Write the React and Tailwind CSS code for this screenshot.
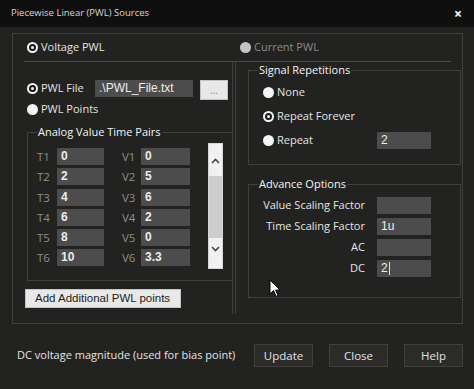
import React from "react";

const Radio = ({ checked, disabled }) => (
  <span
    className={`flex items-center justify-center w-[11px] h-[11px] rounded-full shrink-0 ${
      disabled ? "bg-[#c4c4c4]" : "bg-[#f4f4f4]"
    }`}
  >
    {checked && (
      <span className="flex items-center justify-center w-[7px] h-[7px] rounded-full bg-[#1a1a1a]">
        <span className="w-[3px] h-[3px] rounded-full bg-[#f4f4f4]" />
      </span>
    )}
  </span>
);

const Field = ({ value, w = "w-[47px]", bold }) => (
  <div
    className={`${w} h-[17px] bg-[#4c4c4c] text-[#ececec] text-[12px] leading-[17px] pl-[4px] ${
      bold ? "font-bold" : ""
    }`}
    style={{ fontFamily: "'Liberation Sans', Arial, sans-serif" }}
  >
    {value}
  </div>
);

const pairs = [
  ["0", "0"],
  ["2", "5"],
  ["4", "6"],
  ["6", "2"],
  ["8", "0"],
  ["10", "3.3"],
];

const GroupTitle = ({ children }) => (
  <span className="absolute -top-[9px] left-[9px] px-[1px] bg-[#222221] text-[11px] leading-[16px] text-[#f4f4f4]">
    {children}
  </span>
);

export default function App() {
  return (
    <div
      className="relative w-[474px] h-[389px] bg-[#222221] overflow-hidden text-[#e4e4e4]"
      style={{ fontFamily: "'Open Sans', 'Noto Sans', sans-serif" }}
    >
      {/* Title bar */}
      <div className="h-[27px] bg-[#0f0f0f] flex items-center justify-between pl-[11px] pr-[12px]">
        <span className="text-[9.5px] text-[#d6d6d6]">Piecewise Linear (PWL) Sources</span>
        <span className="text-[14px] font-bold text-white leading-none">×</span>
      </div>

      {/* Main group */}
      <div className="pt-[6px] pl-[12px]">
        <div className="w-[451px] h-[291px] border border-[#3f3f3d] flex flex-col">
          <div className="h-[27px] flex items-center">
            <div className="w-[227px] pl-[14px] flex items-center gap-[3px]">
              <Radio checked />
              <span className="text-[11px]">Voltage PWL</span>
            </div>
            <div className="flex items-center gap-[3px] text-[#8a8a8a]">
              <Radio disabled />
              <span className="text-[11px]">Current PWL</span>
            </div>
          </div>
          <div className="ml-[11px] w-[427px] h-px bg-[#4a4a48]" />

          <div className="flex h-[252px]">
            {/* Left column */}
            <div className="w-[220px] border-r border-[#3f3f3d] flex flex-col">
              <div className="mt-[18px] pl-[14px] flex items-start">
                <div className="w-[68px] h-[17px] flex items-center gap-[3px]">
                  <Radio checked />
                  <span className="text-[11px]">PWL File</span>
                </div>
                <Field value=".\PWL_File.txt" w="w-[98px]" />
                <button className="ml-[7px] w-[28px] h-[20px] bg-[#e8e8e8] border border-[#c2c2c2] text-[#8a8a8a] text-[10px] leading-[18px]">
                  ...
                </button>
              </div>
              <div className="mt-[1px] pl-[14px] h-[17px] flex items-center gap-[3px]">
                <Radio />
                <span className="text-[11px]">PWL Points</span>
              </div>

              {/* Analog group */}
              <div className="relative mt-[14px] ml-[14px] w-[205px] h-[149px] border-l border-t border-b border-[#3f3f3d] flex">
                <GroupTitle>Analog Value Time Pairs</GroupTitle>
                <div className="mt-[15px] ml-[9px] flex flex-col gap-[3px]">
                  {pairs.map(([t, v], i) => (
                    <div key={i} className="flex items-center">
                      <span className="w-[20px] text-[11.5px] text-[#8e8e8e]">T{i + 1}</span>
                      <Field value={t} bold />
                      <span className="ml-[18px] w-[19px] text-[11.5px] text-[#8e8e8e]">V{i + 1}</span>
                      <Field value={v} w="w-[49px]" bold />
                    </div>
                  ))}
                </div>
                <div className="mt-[10px] ml-[18px] w-[15px] h-[126px] bg-[#f1f1f1] border border-[#d6d6d6] flex flex-col items-center">
                  <svg width="11" height="32" viewBox="0 0 11 32" className="shrink-0">
                    <path d="M2 19 L5.5 15.5 L9 19" fill="none" stroke="#4a4a4a" strokeWidth="1.6" />
                  </svg>
                  <div className="w-[13px] h-[62px] bg-[#cdcdcd]" />
                  <svg width="11" height="30" viewBox="0 0 11 30" className="shrink-0">
                    <path d="M2 9 L5.5 12.5 L9 9" fill="none" stroke="#4a4a4a" strokeWidth="1.6" />
                  </svg>
                </div>
              </div>

              <button
                className="mt-[8px] ml-[12px] w-[156px] h-[19px] bg-[#e8e8e8] border border-[#c4c4c4] text-[#1e1e1e] text-[11.5px] leading-[17px] text-left pl-[9px]"
                style={{ fontFamily: "'Liberation Sans', Arial, sans-serif" }}
              >
                Add Additional PWL points
              </button>
            </div>

            {/* Right column */}
            <div className="ml-[2px] w-[226px] border-l border-[#3f3f3d] flex flex-col">
              <div className="relative mt-[8px] ml-[12px] w-[213px] h-[95px] border border-[#3f3f3d] flex flex-col pt-[13px] pl-[14px] gap-[7px]">
                <GroupTitle>Signal Repetitions</GroupTitle>
                <div className="h-[17px] flex items-center gap-[3px]">
                  <Radio />
                  <span className="text-[11px]">None</span>
                </div>
                <div className="h-[17px] flex items-center gap-[3px]">
                  <Radio checked />
                  <span className="text-[11px]">Repeat Forever</span>
                </div>
                <div className="h-[17px] flex items-center">
                  <div className="w-[114px] flex items-center gap-[3px]">
                    <Radio />
                    <span className="text-[11px]">Repeat</span>
                  </div>
                  <Field value="2" w="w-[54px]" />
                </div>
              </div>

              <div className="relative mt-[19px] ml-[12px] w-[213px] h-[114px] border border-[#3f3f3d] flex flex-col pt-[12px] gap-[4px]">
                <GroupTitle>Advance Options</GroupTitle>
                {[
                  ["Value Scaling Factor", ""],
                  ["Time Scaling Factor", "1u"],
                  ["AC", ""],
                  ["DC", "2"],
                ].map(([label, val], i) => (
                  <div key={label} className="flex items-center">
                    <span className="w-[117px] text-right text-[11px] pr-[1px]">{label}</span>
                    <div className="ml-[11px] relative">
                      <Field value={val} w="w-[54px]" />
                      {i === 3 && (
                        <span className="absolute left-[12px] top-[2px] w-px h-[13px] bg-[#e0e0e0]" />
                      )}
                    </div>
                  </div>
                ))}
              </div>
            </div>
          </div>
        </div>
      </div>

      {/* Bottom bar */}
      <div className="mt-[20px] h-[23px] flex items-center">
        <span className="w-[254px] pl-[17px] text-[11px]">DC voltage magnitude (used for bias point)</span>
        <div className="flex gap-[16px]">
          {["Update", "Close", "Help"].map((b) => (
            <button
              key={b}
              className="w-[59px] h-[23px] bg-[#2b2b2a] border border-[#3f3f3d] text-[11.5px] text-[#e2e2e2]"
            >
              {b}
            </button>
          ))}
        </div>
      </div>

      {/* mouse cursor */}
      <svg className="absolute left-[269px] top-[279px]" width="12" height="19" viewBox="0 0 12 19">
        <path d="M1 1 L1 15 L4.5 11.5 L7 17.5 L9 16.5 L6.6 11 L11 11 Z" fill="#ffffff" stroke="#000000" strokeWidth="1" />
      </svg>
    </div>
  );
}
